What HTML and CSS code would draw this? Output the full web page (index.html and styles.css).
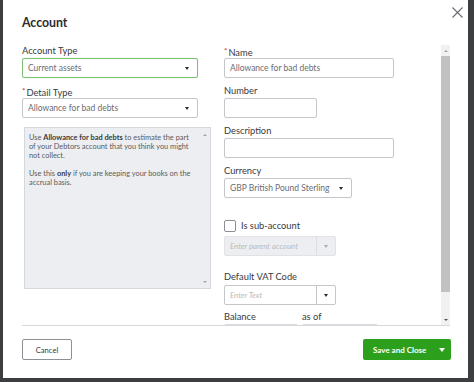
FILE: index.html
```html
<!DOCTYPE html>
<html>
<head>
<meta charset="utf-8">
<link rel="stylesheet" href="styles.css">
</head>
<body>
<div class="modal">
  <header class="head">
    <h1 class="title">Account</h1>
    <button class="close" aria-label="Close">
      <svg width="11" height="11" viewBox="0 0 11 11"><path d="M0.5 0.5 L10.5 10.5 M10.5 0.5 L0.5 10.5" stroke="#6b6c72" stroke-width="1.1" fill="none"/></svg>
    </button>
  </header>
  <div class="body">
    <div class="form">
      <div class="col col-left">
        <div class="field">
          <div class="label">Account Type</div>
          <div class="select focus w176"><span class="val">Current assets</span><i class="caret"></i></div>
        </div>
        <div class="field">
          <div class="label"><span class="req">*</span>Detail Type</div>
          <div class="select w176"><span class="val">Allowance for bad debts</span><i class="caret"></i></div>
        </div>
        <div class="help">
          <div class="help-text">
            <p>Use <b>Allowance for bad debts</b> to estimate the part<br>of your Debtors account that you think you might<br>not collect.</p>
            <p>Use this <b>only</b> if you are keeping your books on the<br>accrual basis.</p>
          </div>
          <div class="help-arrows"><i class="tri-up light"></i><i class="tri-down light"></i></div>
        </div>
      </div>
      <div class="col col-right">
        <div class="field">
          <div class="label"><span class="req">*</span>Name</div>
          <div class="input w170"><span class="val">Allowance for bad debts</span></div>
        </div>
        <div class="field">
          <div class="label">Number</div>
          <div class="input w93"></div>
        </div>
        <div class="field">
          <div class="label">Description</div>
          <div class="input w170"></div>
        </div>
        <div class="field">
          <div class="label">Currency</div>
          <div class="select w128"><span class="val">GBP British Pound Sterling</span><i class="caret"></i></div>
        </div>
        <label class="check"><span class="box"></span><span>Is sub-account</span></label>
        <div class="combo disabled w112"><span class="ph">Enter parent account</span><span class="btn"><i class="caret grey"></i></span></div>
        <div class="label vat">Default VAT Code</div>
        <div class="combo vat-input w112"><span class="ph">Enter Text</span><span class="btn"><i class="caret"></i></span></div>
        <div class="bal-row">
          <div class="bal"><div class="label">Balance</div><div class="input w74"></div></div>
          <div class="bal"><div class="label">as of</div><div class="input w76"></div></div>
        </div>
      </div>
    </div>
    <div class="scrollbar">
      <span class="sb-btn"><i class="tri-up light"></i></span>
      <span class="thumb"></span>
      <span class="track"></span>
      <span class="sb-btn"><i class="tri-down"></i></span>
    </div>
  </div>
  <div class="sep"></div>
  <footer class="foot">
    <button class="btn-cancel">Cancel</button>
    <button class="btn-save"><span>Save and Close</span><i class="caret white"></i></button>
  </footer>
</div>
</body>
</html>
```
FILE: styles.css
```css
* { box-sizing: border-box; }
html, body { margin: 0; padding: 0; }
body {
  width: 474px;
  height: 382px;
  background: #3d3e40;
  font-family: "Lato", "Open Sans", sans-serif;
  color: #393a3d;
  overflow: hidden;
}
.modal {
  margin-left: 3px;
  width: 465px;
  height: 378px;
  background: #fff;
  display: flex;
  flex-direction: column;
}
.head {
  height: 44px;
  display: flex;
  justify-content: space-between;
  align-items: flex-start;
  padding-left: 19px;
  flex: none;
}
.title {
  margin: 15px 0 0;
  font-size: 12.3px;
  line-height: 16px;
  font-weight: 700;
  color: #2b2c2e;
}
.close {
  margin: 7px 5px 0 0;
  padding: 0;
  border: 0;
  background: none;
  width: 11px;
  height: 11px;
  display: block;
}
.close svg { display: block; }
.body {
  height: 281px;
  flex: none;
  display: flex;
  padding: 0 18px 0 19px;
  overflow: hidden;
}
.form {
  width: 419px;
  display: flex;
  gap: 13px;
  overflow: hidden;
}
.col-left { width: 189px; flex: none; }
.col-right { flex: 1; }
.field { margin-bottom: 6px; }
.label {
  font-size: 9.3px;
  line-height: 14px;
  height: 14px;
  color: #393a3d;
  white-space: nowrap;
}
.req { color: #d52b1e; font-size: 8px; vertical-align: 2px; margin-right: 1px; }
.select, .input, .combo {
  height: 20px;
  border: 1px solid #c3c6cb;
  border-radius: 2px;
  background: #fff;
  display: flex;
  align-items: center;
  font-size: 8.5px;
  color: #6b6c72;
}
.select { padding: 0 8px 0 5px; justify-content: space-between; }
.input { padding: 0 5px; }
.select.focus { border-color: #7fc177; box-shadow: 0 0 1px #b6e0b0; }
.val { white-space: nowrap; }
.w176 { width: 176px; }
.w170 { width: 170px; }
.w128 { width: 128px; }
.w112 { width: 112px; }
.w93 { width: 93px; }
.w74 { width: 74px; }
.w76 { width: 76px; }
.caret {
  display: block;
  width: 0; height: 0;
  border-left: 2.5px solid transparent;
  border-right: 2.5px solid transparent;
  border-top: 3px solid #2b2c2e;
}
.caret.grey { border-top-color: #a8abb0; }
.caret.white { border-left-width: 3.5px; border-right-width: 3.5px; border-top: 4px solid #fff; }
.help {
  margin: 9px 0 0 2px;
  width: 187px;
  height: 162px;
  background: #eceef1;
  border: 1px solid #d4d7dc;
  display: flex;
  justify-content: space-between;
}
.help-text {
  padding: 5px 0 0 4px;
  font-size: 7.4px;
  line-height: 9px;
  color: #5a5b60;
  white-space: nowrap;
}
.help-text p { margin: 0 0 9px; }
.help-text b { color: #393a3d; font-weight: 700; }
.help-arrows {
  width: 10px;
  display: flex;
  flex-direction: column;
  justify-content: space-between;
  align-items: center;
  padding: 6px 0 5px;
}
.tri-up, .tri-down {
  display: block;
  width: 0; height: 0;
  border-left: 2px solid transparent;
  border-right: 2px solid transparent;
}
.tri-up { border-bottom: 2.5px solid #505050; }
.tri-down { border-top: 2.5px solid #505050; }
.tri-up.light { border-bottom-color: #a3a3a3; }
.tri-down.light { border-top-color: #a3a3a3; }
.check {
  margin-top: 22px;
  display: flex;
  align-items: center;
  gap: 5px;
  font-size: 9.3px;
  line-height: 12px;
  color: #393a3d;
}
.check .box {
  width: 12px; height: 12px;
  border: 1px solid #8d9096;
  border-radius: 2px;
  background: #fff;
}
.combo { margin-top: 4px; justify-content: space-between; padding-left: 5px; font-size: 7.8px; }
.combo.vat-input { margin-top: 1px; }
.combo.disabled { background: #eceef1; border-color: #e0e2e6; }
.ph { font-style: italic; color: #b9bcc1; white-space: nowrap; }
.combo .btn {
  width: 19px;
  height: 100%;
  border-left: 1px solid #c3c6cb;
  display: flex;
  align-items: center;
  justify-content: center;
}
.combo.disabled .btn { border-left-color: #dcdee2; }
.vat { margin-top: 14px; }
.bal-row { display: flex; gap: 4px; margin-top: 5px; }
.bal-row .input { border-color: #d9dbdf; }
.scrollbar {
  width: 9px;
  margin-top: 1px;
  background: #f1f1f1;
  display: flex;
  flex-direction: column;
}
.sb-btn {
  height: 11px;
  display: flex;
  align-items: center;
  justify-content: center;
  flex: none;
}
.thumb { height: 236px; background: #c1c1c1; flex: none; }
.track { flex: 1; }
.sep {
  height: 1px;
  background: #d4d7dc;
  margin: 0 18px 0 19px;
  flex: none;
}
.foot {
  display: flex;
  justify-content: space-between;
  padding: 13px 17px 0 19px;
}
.btn-cancel {
  width: 50px;
  height: 21px;
  border: 1px solid #8d9096;
  border-radius: 2px;
  background: #fff;
  font-family: inherit;
  font-size: 7.6px;
  font-weight: 400;
  color: #393a3d;
  padding: 0;
}
.btn-save {
  width: 88px;
  height: 21px;
  border: 0;
  border-radius: 2px;
  background: #2ca01c;
  color: #fff;
  font-family: inherit;
  font-size: 8px;
  font-weight: 700;
  display: flex;
  align-items: center;
  justify-content: space-between;
  padding: 0 6px 0 10px;
}
```
